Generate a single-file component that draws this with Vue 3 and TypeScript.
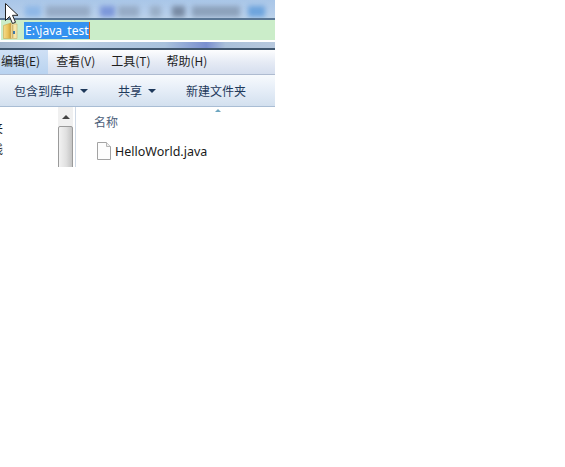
<script setup lang="ts">
const blobs = [
  { w: 16, c: '#86b3e6', m: 25 }, { w: 44, c: '#8fa3bd', m: 5 }, { w: 15, c: '#6f8ad6', m: 10 }, { w: 21, c: '#8fa3bd', m: 3 },
  { w: 11, c: '#93a7bf', m: 11 }, { w: 13, c: '#6a7b93', m: 11 }, { w: 48, c: '#8397b0', m: 7 }, { w: 17, c: '#5c9ada', m: 8 },
]
</script>

<template>
  <div class="page">
    <div class="window">
      <div class="titlebar">
        <span v-for="(b, i) in blobs" :key="i" class="blob" :style="{ width: b.w + 'px', marginLeft: b.m + 'px', background: b.c }"></span>
      </div>
      <div class="address">
        <svg class="folder" width="15" height="17" viewBox="0 0 15 17">
          <defs>
            <linearGradient id="fold" x1="0" x2="1" y1="0" y2="0">
              <stop offset="0" stop-color="#f4dc8e" />
              <stop offset=".6" stop-color="#e9c25a" />
              <stop offset="1" stop-color="#c79a35" />
            </linearGradient>
          </defs>
          <path d="M.5 3.5 L8 1V16.5H.5z" fill="url(#fold)" stroke="#c9a64e" stroke-width=".6" />
          <path d="M8 2h6v14.5H8z" fill="#f6e6ab" stroke="#cdb066" stroke-width=".6" />
          <rect x="9" y="3" width="1.4" height="13" fill="#b99a4c" opacity=".6" />
          <rect x="10" y="9" width="2" height="3" fill="#3f78a8" />
        </svg>
        <span class="path">E:\java_test</span><span class="caret"></span>
      </div>
      <div class="blurband"></div>
      <div class="menubar">
        <span class="menu active">编辑(E)</span>
        <span class="menu">查看(V)</span>
        <span class="menu">工具(T)</span>
        <span class="menu">帮助(H)</span>
      </div>
      <div class="toolbar">
        <span class="tool first">包含到库中<i class="arrow"></i></span>
        <span class="tool second">共享<i class="arrow"></i></span>
        <span class="tool third">新建文件夹</span>
      </div>
      <div class="content">
        <div class="tree">
          <div class="tree-labels">
            <span>夹</span>
            <span>线</span>
          </div>
          <div class="scrollbar">
            <div class="scroll-up"><i></i></div>
            <div class="thumb"></div>
          </div>
        </div>
        <div class="files">
          <div class="header">
            <span class="name-col">名称</span>
            <i class="sort"></i>
          </div>
          <div class="file">
            <svg width="14" height="18" viewBox="0 0 14 18">
              <path d="M.5.5h9l4 4v13H.5z" fill="#fdfdfd" stroke="#a3a3a3" />
              <path d="M9.5.5v4h4" fill="#eeeeee" stroke="#b5b5b5" />
            </svg>
            <span>HelloWorld.java</span>
          </div>
        </div>
      </div>
    </div>
    <svg class="cursor" width="18" height="25" viewBox="0 0 18 25">
      <path d="M5.5 2.5v17l4-4 3 7 3-1.2-3-7h5.5z" fill="#fff" stroke="#222" stroke-width="1" />
    </svg>
  </div>
</template>

<style scoped>
.page {
  position: relative;
  width: 565px;
  height: 467px;
  background: #fff;
  overflow: hidden;
  font-family: "Noto Sans CJK SC", "Liberation Sans", sans-serif;
  font-size: 12px;
}
.window {
  width: 275px;
  height: 167px;
  overflow: hidden;
  display: flex;
  flex-direction: column;
}
.titlebar {
  height: 18px;
  flex: none;
  display: flex;
  align-items: center;
  padding-top: 4px;
  box-sizing: border-box;
  background: linear-gradient(#a9c6e8, #b4cdea 70%, #bcd2ea);
  overflow: hidden;
}
.blob {
  flex: none;
  height: 11px;
  filter: blur(2.5px);
  opacity: 0.8;
}
.address {
  flex: none;
  height: 24px;
  box-sizing: border-box;
  display: flex;
  align-items: center;
  padding-left: 3px;
  background: #cbedc9;
  border-top: 2px solid #5a7795;
  border-bottom: 2px solid #fff;
  box-shadow: inset 1px 0 0 #fff;
}
.folder {
  flex: none;
  margin-right: 6px;
}
.path {
  background: #3392f0;
  color: #fff;
  font-family: "Noto Sans", sans-serif;
  font-size: 12px;
  line-height: 17px;
  padding-left: 1px;
}
.caret {
  width: 1px;
  height: 17px;
  background: #d9641a;
}
.blurband {
  flex: none;
  height: 8px;
  background: linear-gradient(90deg, #a5b8cf, #b9cbe2 25%, #a9c2dd 60%, #7a8fd0 75%, #aac0da 82%, #b7c8dd);
  border-bottom: 2px solid #41576f;
  box-sizing: border-box;
}
.menubar {
  flex: none;
  height: 25px;
  display: flex;
  align-items: stretch;
  background: linear-gradient(#fdfdfe, #e6ebf5 50%, #d5deee);
  border-bottom: 1px solid #aebbd0;
  box-sizing: border-box;
  color: #1e1e1e;
}
.menu {
  display: flex;
  align-items: center;
  padding-bottom: 3px;
  margin-left: 8px;
  margin-right: 8px;
}
.menu.active {
  margin: 0;
  padding: 0 8px 3px 1px;
  background: linear-gradient(#cfe0f5, #b9d3f0);
}
.toolbar {
  flex: none;
  height: 32px;
  box-sizing: border-box;
  display: flex;
  align-items: center;
  background: linear-gradient(#f7fafd, #e5edf7 50%, #d3e0ef);
  border-bottom: 1px solid #a9bdd4;
  color: #1e395b;
}
.tool {
  display: flex;
  align-items: center;
}
.first {
  margin-left: 14px;
}
.second {
  margin-left: 30px;
}
.third {
  margin-left: 30px;
}
.arrow {
  width: 0;
  height: 0;
  margin-left: 6px;
  border-left: 4px solid transparent;
  border-right: 4px solid transparent;
  border-top: 4px solid #1e395b;
}
.content {
  flex: 1;
  display: flex;
  min-height: 0;
  background: #fff;
}
.tree {
  flex: none;
  width: 76px;
  display: flex;
  justify-content: space-between;
  border-right: 1px solid #cfd9e6;
  overflow: hidden;
  box-sizing: border-box;
}
.tree-labels {
  display: flex;
  flex-direction: column;
  gap: 4px;
  margin-left: -9px;
  padding-top: 12px;
  color: #1e1e1e;
  line-height: 17px;
}
.scrollbar {
  width: 15px;
  margin-right: 2px;
  background: #f0f0f0;
}
.scroll-up {
  height: 19px;
  display: flex;
  align-items: center;
  justify-content: center;
}
.scroll-up i {
  width: 0;
  height: 0;
  border-left: 4px solid transparent;
  border-right: 4px solid transparent;
  border-bottom: 4px solid #444;
}
.thumb {
  height: 50px;
  box-sizing: border-box;
  border: 1px solid #9a9a9a;
  border-radius: 2px;
  background: linear-gradient(90deg, #f2f2f2, #e0e0e0 55%, #c4c4c4);
}
.files {
  flex: 1;
  min-width: 0;
  padding-left: 18px;
}
.header {
  position: relative;
  height: 28px;
  display: flex;
  align-items: center;
  color: #4c607a;
}
.name-col {
  padding-top: 1px;
}
.sort {
  position: absolute;
  left: 121px;
  top: 2px;
  width: 0;
  height: 0;
  border-left: 3px solid transparent;
  border-right: 3px solid transparent;
  border-bottom: 3px solid #6ea6c0;
}
.file {
  display: flex;
  align-items: center;
  gap: 4px;
  margin-top: 7px;
  margin-left: 3px;
  font-family: "Noto Sans", sans-serif;
  font-size: 12.5px;
  color: #1a1a1a;
}
.cursor {
  position: absolute;
  left: 0;
  top: 1px;
}
</style>
